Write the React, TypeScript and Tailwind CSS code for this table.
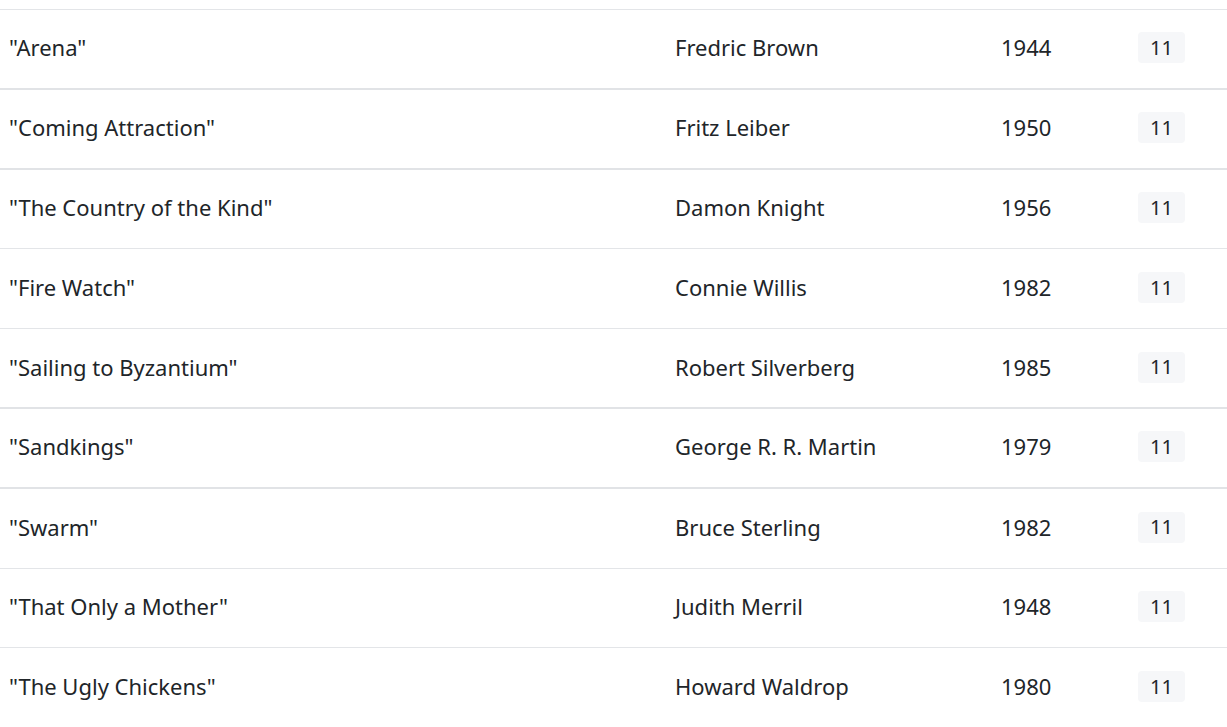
const rows = [
  { title: '"Arena"', author: "Fredric Brown", year: "1944", thick: true },
  { title: '"Coming Attraction"', author: "Fritz Leiber", year: "1950", thick: true },
  { title: '"The Country of the Kind"', author: "Damon Knight", year: "1956", thick: false },
  { title: '"Fire Watch"', author: "Connie Willis", year: "1982", thick: false },
  { title: '"Sailing to Byzantium"', author: "Robert Silverberg", year: "1985", thick: true },
  { title: '"Sandkings"', author: "George R. R. Martin", year: "1979", thick: true },
  { title: '"Swarm"', author: "Bruce Sterling", year: "1982", thick: false },
  { title: '"That Only a Mother"', author: "Judith Merril", year: "1948", thick: false },
  { title: '"The Ugly Chickens"', author: "Howard Waldrop", year: "1980", thick: false },
];

const App = () => {
  return (
    <div className="w-[1227px] h-[727px] overflow-hidden bg-white text-[#212529] font-['Noto_Sans',sans-serif] text-[22px]">
      <div className="h-[10px] border-b border-[#e3e5e8]" />
      {rows.map((r) => (
        <div
          key={r.title}
          className={
            r.thick
              ? "flex items-center h-[79.8px] border-b-2 border-[#e1e3e6]"
              : "flex items-center h-[79.8px] border-b border-[#e3e5e8]"
          }
        >
          <div className="w-[666px] pl-[9px] pb-[2px]">{r.title}</div>
          <div className="w-[326px] pl-[9px] pb-[2px]">{r.author}</div>
          <div className="w-[146px] pl-[9px] pb-[2px]">{r.year}</div>
          <div className="flex pb-[2px]">
            <span className="w-[47px] h-[31px] rounded-[4px] bg-[#f6f7f9] text-[20px] flex items-center justify-center">
              11
            </span>
          </div>
        </div>
      ))}
    </div>
  );
};

export default App;
